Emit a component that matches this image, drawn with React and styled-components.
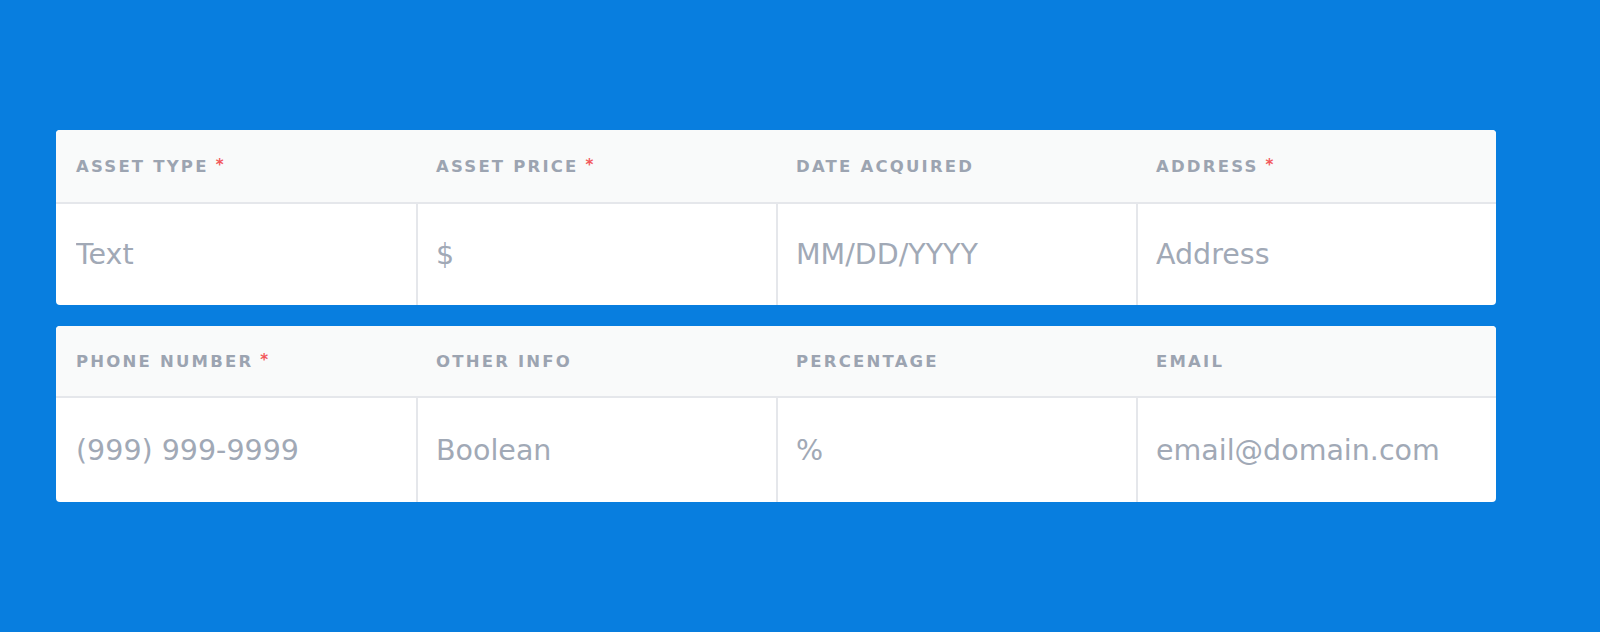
import React from 'react'
import styled, { createGlobalStyle } from 'styled-components'

const fields = [
  [
    { label: 'Asset Type', required: true, placeholder: 'Text' },
    { label: 'Asset Price', required: true, placeholder: '$' },
    { label: 'Date Acquired', placeholder: 'MM/DD/YYYY' },
    { label: 'Address', required: true, placeholder: 'Address' },
  ],
  [
    { label: 'Phone Number', required: true, placeholder: '(999) 999-9999' },
    { label: 'Other Info', placeholder: 'Boolean' },
    { label: 'Percentage', placeholder: '%' },
    { label: 'Email', placeholder: 'email@domain.com' },
  ],
]

const sizes = [
  { head: 72, body: 101 },
  { head: 70, body: 104 },
]

const App = () => {
  return (
    <>
      <GlobalStyle />
      <Page>
        {fields.map((row, i) => (
          <Card key={i}>
            <HeaderRow $h={sizes[i].head}>
              {row.map(f => (
                <Label key={f.label}>
                  {f.label}
                  {f.required && <Required>*</Required>}
                </Label>
              ))}
            </HeaderRow>
            <BodyRow $h={sizes[i].body}>
              {row.map(f => (
                <Cell key={f.label}>
                  <Field type="text" placeholder={f.placeholder} />
                </Cell>
              ))}
            </BodyRow>
          </Card>
        ))}
      </Page>
    </>
  )
}

export default App


// ================= styled ===================

const GlobalStyle = createGlobalStyle`
    html, body {
        margin: 0;
        padding: 0;
        background: #087edf;
    }
    * {
        box-sizing: border-box;
    }
`;

const Page = styled.div`
    min-height: 632px;
    padding: 130px 0 0 56px;
    display: flex;
    flex-direction: column;
    gap: 21px;
    background: #087edf;
    font-family: "DejaVu Sans", "Liberation Sans", sans-serif;
`;

const Card = styled.div`
    width: 1440px;
    background: #fff;
    border-radius: 4px;
    overflow: hidden;
`;

const HeaderRow = styled.div`
    display: grid;
    grid-template-columns: repeat(4, 1fr);
    grid-template-rows: 1fr;
    height: ${props => props.$h + 2}px;
    background: #f9fafa;
    border-bottom: 2px solid #e5e7eb;
`;

const Label = styled.div`
    display: flex;
    align-items: center;
    padding-left: 20px;
    font-size: 16.5px;
    font-weight: 700;
    letter-spacing: 2.2px;
    text-transform: uppercase;
    color: #9ca4b1;
    white-space: nowrap;
`;

const Required = styled.span`
    color: #f2585c;
    margin-left: 7px;
    font-size: 15px;
    position: relative;
    top: -1px;
`;

const BodyRow = styled.div`
    display: grid;
    grid-template-columns: repeat(4, 1fr);
    height: ${props => props.$h}px;
`;

const Cell = styled.div`
    display: flex;
    align-items: center;
    & + & {
        border-left: 2px solid #e5e7eb;
    }
`;

const Field = styled.input`
    width: 100%;
    height: 100%;
    border: none;
    outline: none;
    background: transparent;
    padding: 0 0 0 20px;
    font-family: "DejaVu Sans", "Liberation Sans", sans-serif;
    font-size: 28.5px;
    color: #6b7380;
    ${Cell} + ${Cell} & {
        padding-left: 18px;
    }
    &::placeholder {
        color: #a1a9b6;
        opacity: 1;
    }
`;
